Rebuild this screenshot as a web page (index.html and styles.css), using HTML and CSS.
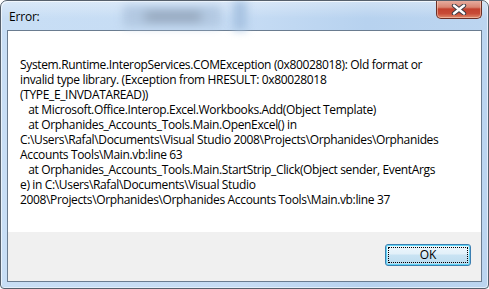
FILE: index.html
```html
<!DOCTYPE html>
<html>
<head>
<meta charset="utf-8">
<link rel="stylesheet" href="styles.css">
</head>
<body>
<div class="window">
  <div class="titlebar">
    <div class="glass-blur"><span class="blur-btn"></span><span class="blur-band"></span></div>
    <span class="title">Error:</span>
    <div class="close">
      <svg width="16" height="11" viewBox="0 0 16 11">
        <path d="M3 1.5 L13 9.5 M13 1.5 L3 9.5" stroke="#3b3b44" stroke-width="4.4" stroke-linecap="round" fill="none"/>
        <path d="M3 1.5 L13 9.5 M13 1.5 L3 9.5" stroke="#ffffff" stroke-width="2.4" stroke-linecap="round" fill="none"/>
      </svg>
    </div>
  </div>
  <div class="client">
    <div class="message"><pre class="text">System.Runtime.InteropServices.COMException (0x80028018): Old format or
invalid type library. (Exception from HRESULT: 0x80028018
(TYPE_E_INVDATAREAD))
   at Microsoft.Office.Interop.Excel.Workbooks.Add(Object Template)
   at Orphanides_Accounts_Tools.Main.OpenExcel() in
C:\Users\Rafal\Documents\Visual Studio 2008\Projects\Orphanides\Orphanides
Accounts Tools\Main.vb:line 63
   at Orphanides_Accounts_Tools.Main.StartStrip_Click(Object sender, EventArgs
e) in C:\Users\Rafal\Documents\Visual Studio
2008\Projects\Orphanides\Orphanides Accounts Tools\Main.vb:line 37</pre></div>
    <div class="buttons">
      <button class="ok"><span class="focus">OK</span></button>
    </div>
  </div>
</div>
</body>
</html>
```
FILE: styles.css
```css
html, body {
  margin: 0;
  padding: 0;
  background: #ffffff;
}
body {
  width: 489px;
  height: 289px;
  overflow: hidden;
  font-family: "Open Sans", "Noto Sans", sans-serif;
}
.window {
  box-sizing: border-box;
  width: 489px;
  height: 289px;
  border: 1px solid #56606c;
  border-radius: 7px 7px 4px 4px;
  background: linear-gradient(90deg, #c8def5 0%, #c6dcf4 50%, #b7d2ef 75%, #bcd5f0 100%);
  display: flex;
  flex-direction: column;
  padding: 0 6px 6px 6px;
  position: relative;
  overflow: hidden;
  box-shadow: inset 1px 1px 0 #eaf3fc, inset -1px -1px 0 #e3eefa;
}
.titlebar {
  height: 29px;
  flex: none;
  display: flex;
  align-items: flex-start;
  position: relative;
}
.glass-blur {
  position: absolute;
  left: -6px;
  right: -6px;
  top: 0;
  bottom: 0;
  background: linear-gradient(180deg, rgba(255,255,255,0.35) 0%, rgba(255,255,255,0) 60%);
}
.blur-btn {
  position: absolute;
  left: 122px;
  top: 5px;
  width: 98px;
  height: 21px;
  border-radius: 4px;
  background: #b3c9e2;
  filter: blur(4px);
}
.blur-btn::after {
  content: "";
  position: absolute;
  left: 22px;
  top: 7px;
  width: 56px;
  height: 7px;
  background: #8797ab;
  filter: blur(3px);
}
.blur-band {
  position: absolute;
  left: 232px;
  top: 0;
  width: 14px;
  height: 29px;
  background: #a8c3e2;
  filter: blur(4px);
}
.title {
  position: relative;
  margin: 7px 0 0 2px;
  font-size: 12px;
  color: #000;
  letter-spacing: -0.2px;
}
.close {
  position: absolute;
  right: 0;
  top: -1px;
  width: 46px;
  height: 19px;
  box-sizing: border-box;
  border: 1px solid #6b2f26;
  border-top: none;
  border-radius: 0 0 5px 5px;
  background: linear-gradient(180deg, #e8b2a5 0%, #d98572 40%, #c2412e 50%, #c84b36 75%, #de8a6c 100%);
  box-shadow: inset 0 0 0 1px rgba(255,220,200,0.5);
  display: flex;
  align-items: center;
  justify-content: center;
}
.close svg {
  display: block;
  margin-top: 0px;
}
.client {
  flex: 1;
  display: flex;
  flex-direction: column;
  border: 1px solid #6a7c90;
  background: #f0f0f0;
}
.message {
  height: 201px;
  flex: none;
  background: #ffffff;
  box-sizing: border-box;
  padding: 26px 0 0 12px;
}
.text {
  margin: 0;
  font-family: "Open Sans", "Noto Sans", sans-serif;
  font-size: 12px;
  line-height: 15px;
  color: #000;
  letter-spacing: -0.35px;
  white-space: pre;
}
.buttons {
  flex: 1;
  display: flex;
  justify-content: flex-end;
  align-items: flex-start;
  padding: 12px 10px 0 0;
}
.ok {
  width: 86px;
  height: 22px;
  box-sizing: border-box;
  padding: 2px;
  border: 1px solid #3c7fb1;
  border-radius: 3px;
  background: linear-gradient(180deg, #eef7fc 0%, #e2f0f9 45%, #c9e3f3 50%, #bcdcef 100%);
  box-shadow: inset 0 0 0 1px #5fd5f5;
  font-family: "Open Sans", "Noto Sans", sans-serif;
  font-size: 12px;
  color: #000;
  display: flex;
  margin: 0;
}
.focus {
  flex: 1;
  display: flex;
  align-items: center;
  justify-content: center;
  border: 1px dotted #000;
  line-height: 14px;
}
```
